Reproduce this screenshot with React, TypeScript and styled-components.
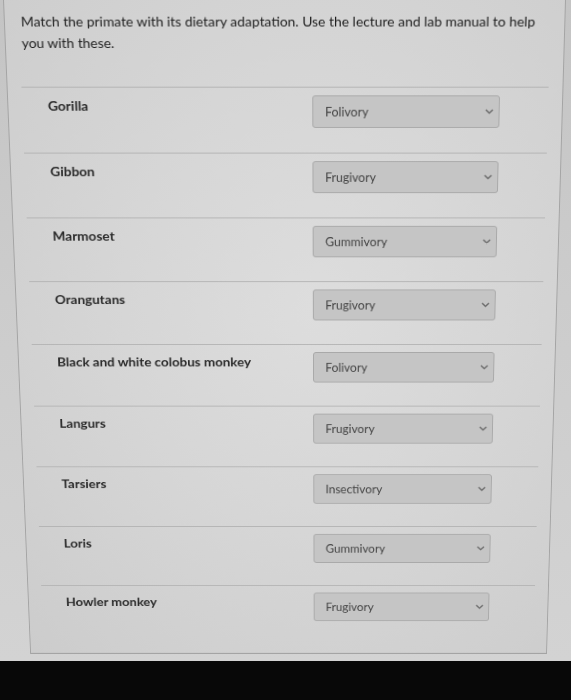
import React from "react";
import styled, { createGlobalStyle } from "styled-components";

const GlobalStyle = createGlobalStyle`
  html, body { margin: 0; padding: 0; }
  body {
    background: #0b0b0b;
    font-family: Lato, "Open Sans", "Liberation Sans", sans-serif;
  }
  * { box-sizing: border-box; }
`;

const Page = styled.div`
  width: 571px;
  height: 700px;
  display: flex;
  flex-direction: column;
  overflow: hidden;
`;

const Screen = styled.div`
  height: 661px;
  flex: none;
  overflow: hidden;
  background: linear-gradient(180deg, #c4c4c4 0%, #cccccc 45%, #d3d3d3 100%);
`;

const Sheet = styled.div`
  padding: 0 5px 0 3px;
  transform-origin: 334px 0;
  transform: perspective(1406px) rotateX(-10deg);
`;

const Panel = styled.section`
  border: 1px solid #a4a4a4;
  border-top: none;
  background: radial-gradient(ellipse at 55% 45%, #dddddd 0%, #d6d6d6 45%, #cccccc 100%);
  padding: 11px 14px 12px 14px;
`;

const Question = styled.p`
  margin: 0 0 34px 2px;
  font-size: 13.9px;
  line-height: 22px;
  color: #1f1f1f;
`;

const List = styled.div`
  display: flex;
  flex-direction: column;
`;

const Row = styled.div`
  display: grid;
  grid-template-columns: 1fr 190px;
  height: 69px;
  border-top: 1px solid #b3b3b3;
  padding: 0 49px 0 26px;
`;

const Label = styled.div`
  padding-top: 9px;
  font-size: 14px;
  line-height: 20px;
  font-weight: 700;
  color: #2a2a2a;
`;

const SelectBox = styled.div`
  margin-top: 8px;
  height: 34px;
  display: flex;
  align-items: center;
  justify-content: space-between;
  padding: 0 5px 0 12px;
  background: #c5c5c5;
  border: 1px solid #a9a9a9;
  border-radius: 3px;
  font-size: 12.5px;
  color: #444444;
`;

const Chevron = styled.svg`
  width: 9px;
  height: 6px;
  flex: none;
`;

const Bezel = styled.div`
  flex: 1;
  background: #080808;
`;

const rows: [string, string][] = [
  ["Gorilla", "Folivory"],
  ["Gibbon", "Frugivory"],
  ["Marmoset", "Gummivory"],
  ["Orangutans", "Frugivory"],
  ["Black and white colobus monkey", "Folivory"],
  ["Langurs", "Frugivory"],
  ["Tarsiers", "Insectivory"],
  ["Loris", "Gummivory"],
  ["Howler monkey", "Frugivory"],
];

export default function App() {
  return (
    <Page>
      <GlobalStyle />
      <Screen>
        <Sheet>
          <Panel>
            <Question>
              Match the primate with its dietary adaptation. Use the lecture and lab manual to help you with these.
            </Question>
            <List>
              {rows.map(([name, diet]) => (
                <Row key={name}>
                  <Label>{name}</Label>
                  <SelectBox>
                    <span>{diet}</span>
                    <Chevron viewBox="0 0 9 6">
                      <path d="M1 1 L4.5 4.5 L8 1" fill="none" stroke="#6a6a6a" strokeWidth="1.5" />
                    </Chevron>
                  </SelectBox>
                </Row>
              ))}
            </List>
          </Panel>
        </Sheet>
      </Screen>
      <Bezel />
    </Page>
  );
}
